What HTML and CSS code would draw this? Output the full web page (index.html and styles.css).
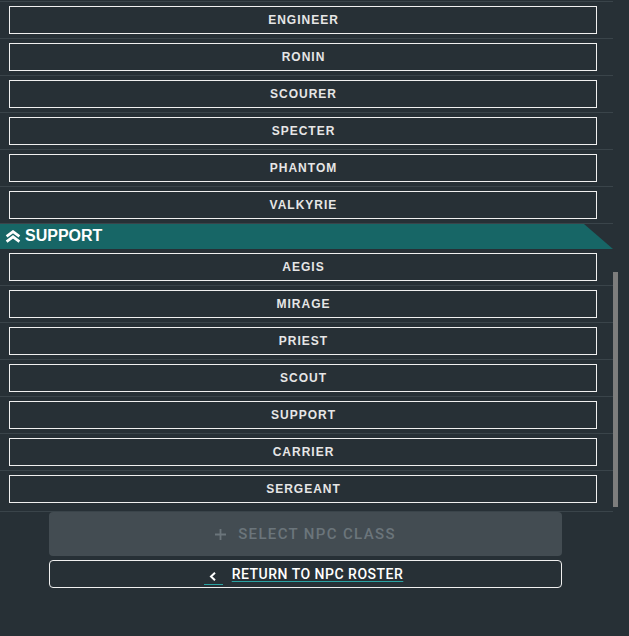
FILE: index.html
```html
<!DOCTYPE html>
<html>
<head>
<meta charset="utf-8">
<link rel="stylesheet" href="styles.css">
</head>
<body>
<div class="panel">
  <div class="list">
    <div class="row"><div class="item">ENGINEER</div></div>
    <div class="row"><div class="item">RONIN</div></div>
    <div class="row"><div class="item">SCOURER</div></div>
    <div class="row"><div class="item">SPECTER</div></div>
    <div class="row"><div class="item">PHANTOM</div></div>
    <div class="row"><div class="item">VALKYRIE</div></div>
    <div class="group-header">
      <svg class="chev" width="16" height="13" viewBox="0 0 16 13"><path d="M1.6 6.4 L8 1.6 L14.4 6.4 M1.6 11.6 L8 6.8 L14.4 11.6" fill="none" stroke="#ffffff" stroke-width="2.7"/></svg>
      <span>SUPPORT</span>
    </div>
    <div class="row"><div class="item">AEGIS</div></div>
    <div class="row"><div class="item">MIRAGE</div></div>
    <div class="row"><div class="item">PRIEST</div></div>
    <div class="row"><div class="item">SCOUT</div></div>
    <div class="row"><div class="item">SUPPORT</div></div>
    <div class="row"><div class="item">CARRIER</div></div>
    <div class="row last"><div class="item">SERGEANT</div></div>
    <div class="thumb"></div>
  </div>
  <div class="footer">
    <div class="btn-select">
      <svg width="11" height="11" viewBox="0 0 11 11"><path d="M5.5 0 V11 M0 5.5 H11" stroke="#6b757b" stroke-width="1.8"/></svg>
      <span>SELECT NPC CLASS</span>
    </div>
    <div class="btn-return">
      <span class="back"><svg width="8" height="9" viewBox="0 0 8 9"><path d="M6 0.8 L2 4.5 L6 8.2" fill="none" stroke="#ffffff" stroke-width="2"/></svg></span>
      <span class="ret-text">RETURN TO NPC ROSTER</span>
    </div>
  </div>
</div>
</body>
</html>
```

FILE: styles.css
```css
html, body {
  margin: 0;
  padding: 0;
  background: #273036;
}
body {
  width: 629px;
  height: 636px;
  overflow: hidden;
  font-family: "Liberation Sans", Arial, sans-serif;
}
.panel {
  padding-top: 1px;
}
.list {
  position: relative;
  width: 613px;
  border-top: 1px solid #3a444a;
  border-bottom: 1px solid #3a444a;
}
.row {
  padding: 4px 16px 4px 9px;
  border-bottom: 1px solid #3a444a;
}
.row.last {
  border-bottom: none;
  padding-bottom: 8px;
}
.item {
  box-sizing: border-box;
  height: 28px;
  border: 1px solid #f0f0f0;
  display: flex;
  align-items: center;
  justify-content: center;
  color: #e6e6e6;
  font-weight: bold;
  font-size: 12px;
  letter-spacing: 1px;
  padding-left: 1px;
}
.group-header {
  box-sizing: border-box;
  height: 25px;
  background: #176666;
  clip-path: polygon(0 0, calc(100% - 29px) 0, 100% 100%, 0 100%);
  display: flex;
  align-items: center;
  gap: 4px;
  padding-left: 5px;
  padding-bottom: 2px;
  color: #ffffff;
  font-weight: bold;
  font-size: 16px;
}
.chev {
  display: block;
  margin-top: 1px;
}
.thumb {
  position: absolute;
  left: 613px;
  top: 270px;
  width: 5px;
  height: 235px;
  background: #7d7d7d;
}
.footer {
  display: flex;
  flex-direction: column;
  gap: 4px;
  padding-left: 49px;
  font-family: Roboto, "Liberation Sans", sans-serif;
  font-weight: 500;
}
.btn-select {
  box-sizing: border-box;
  width: 513px;
  height: 44px;
  background: #434c52;
  border-radius: 4px;
  display: flex;
  align-items: center;
  justify-content: center;
  gap: 12px;
  color: #6b757b;
  font-size: 15px;
  letter-spacing: 1.35px;
}
.btn-return {
  box-sizing: border-box;
  width: 513px;
  height: 28px;
  border: 1px solid #f0f0f0;
  border-radius: 4px;
  display: flex;
  align-items: center;
  justify-content: center;
  gap: 9px;
  color: #ffffff;
  font-size: 14px;
  letter-spacing: 0.5px;
  padding-right: 4px;
}
.back {
  display: flex;
  justify-content: center;
  align-items: center;
  width: 19px;
  height: 14px;
  border-bottom: 1px solid #2aa3a3;
  margin-top: 6px;
}
.ret-text {
  text-decoration: underline;
  text-decoration-color: #2aa3a3;
  text-underline-offset: 2px;
}
```
